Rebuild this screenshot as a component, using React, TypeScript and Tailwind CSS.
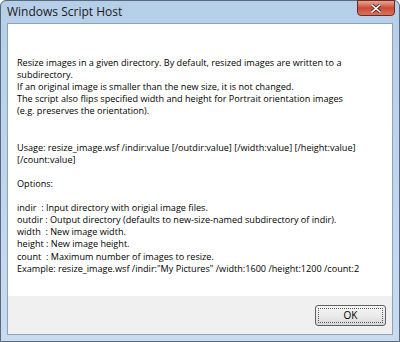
import React from "react";

const lines = [
  "Resize images in a given directory. By default, resized images are written to a",
  "subdirectory.",
  "If an original image is smaller than the new size, it is not changed.",
  "The script also flips specified width and height for Portrait orientation images",
  "(e.g. preserves the orientation).",
  "",
  "",
  "Usage: resize_image.wsf /indir:value [/outdir:value] [/width:value] [/height:value]",
  "[/count:value]",
  "",
  "Options:",
  "",
  "indir  : Input directory with origial image files.",
  "outdir : Output directory (defaults to new-size-named subdirectory of indir).",
  "width  : New image width.",
  "height : New image height.",
  "count  : Maximum number of images to resize.",
  'Example: resize_image.wsf /indir:"My Pictures" /width:1600 /height:1200 /count:2',
];

export default function App() {
  return (
    <div className="w-[400px] h-[342px] bg-white overflow-hidden" style={{ fontFamily: '"Open Sans", "Noto Sans", sans-serif' }}>
      <div className="relative w-[400px] h-[342px] flex flex-col border border-[#5a6a7c] rounded-t-[6px] bg-gradient-to-b from-[#b6cfe9] via-[#bfd5ed] to-[#c8dcf1]">
        {/* title bar */}
        <div className="h-[22px] flex items-center pl-[6px] text-[12px] text-[#1a1a1a]">
          Windows Script Host
        </div>
        <div className="absolute right-[4px] top-[-1px] w-[38px] h-[16px] rounded-b-[4px] border border-[#6b2a24] bg-gradient-to-b from-[#e7a596] via-[#c94a35] to-[#d8735c] flex items-center justify-center">
          <svg width="10" height="9" viewBox="0 0 10 9">
            <path d="M1 1 L9 8 M9 1 L1 8" stroke="#3a1a14" strokeWidth="3" strokeLinecap="square" />
            <path d="M1 1 L9 8 M9 1 L1 8" stroke="#ffffff" strokeWidth="1.6" strokeLinecap="square" />
          </svg>
        </div>
        {/* client */}
        <div className="mx-[6px] mb-[6px] flex-1 flex flex-col border border-[#8da2b8] bg-[#f0f0f0]">
          <div className="h-[272px] bg-white pt-[33px] pl-[9px] text-[9.1px] leading-[12.1px] text-black whitespace-pre">
            {lines.map((l, i) => (
              <div key={i} className="h-[12.1px]">{l || "\u00a0"}</div>
            ))}
          </div>
          <div className="flex-1 flex justify-end items-start pt-[9px] pr-[6px]">
            <div className="w-[71px] h-[21px] rounded-[3px] border border-[#606060] bg-gradient-to-b from-[#f4f4f4] via-[#ebebeb] to-[#d8d8d8] p-[2px]">
              <div className="w-full h-full border border-dotted border-[#555] flex items-center justify-center text-[10px] text-black">
                OK
              </div>
            </div>
          </div>
        </div>
      </div>
    </div>
  );
}
